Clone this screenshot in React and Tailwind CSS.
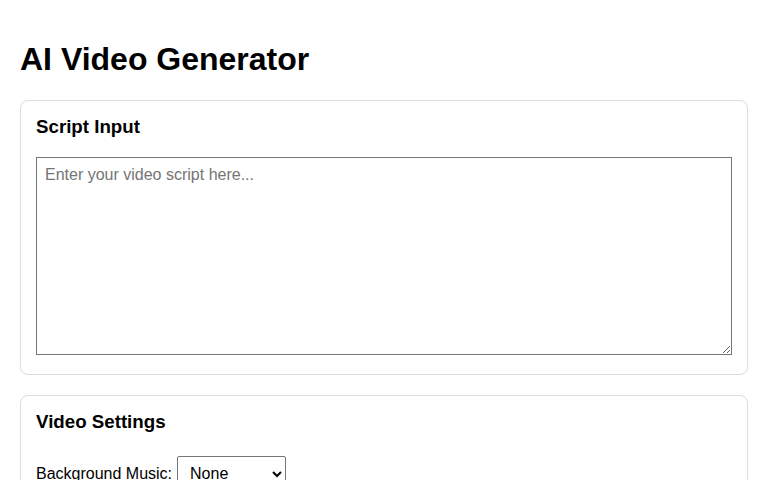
export default function App() {
  return (
    <div className="min-h-screen bg-white p-5 text-black" style={{ fontFamily: '"Liberation Sans", Arial, sans-serif' }}>
      <h1 className="my-[21.44px] text-[32px] font-bold leading-[37px]">AI Video Generator</h1>
      <div className="flex flex-col gap-5">
        <div className="rounded-lg border border-[#dddddd] p-[15px]">
          <h3 className="mb-[19px] text-[18.72px] font-bold leading-[22px]">Script Input</h3>
          <textarea
            className="mb-1 block h-[198px] w-full resize-y border border-[#767676] p-2 text-base leading-[18px] placeholder:text-[#757575] outline-none"
            placeholder="Enter your video script here..."
          />
        </div>
        <div className="rounded-lg border border-[#dddddd] p-[15px]">
          <h3 className="mb-[23px] text-[18.72px] font-bold leading-[22px]">Video Settings</h3>
          <div className="flex items-center gap-[5px] text-base">
            <label>Background Music:</label>
            <select className="h-[36px] w-[109px] rounded-[2px] border border-[#767676] bg-white px-2 text-base">
              <option>None</option>
            </select>
          </div>
          <div className="h-20" />
        </div>
      </div>
    </div>
  );
}
